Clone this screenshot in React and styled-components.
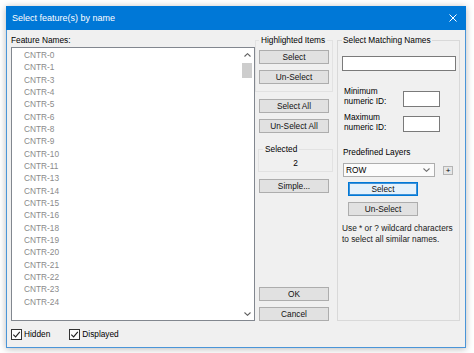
import React from 'react';
import styled, { createGlobalStyle } from 'styled-components';

const GlobalStyle = createGlobalStyle`
  html, body {
    margin: 0;
    padding: 0;
    background: #ffffff;
  }
  body {
    font-family: "Liberation Sans", Arial, sans-serif;
    font-size: 8.3px;
    color: #000;
  }
`;

const names = ['0', '1', '3', '4', '5', '6', '8', '9', '10', '11', '13', '14', '15', '16', '18', '19', '20', '21', '22', '23', '24'];

const Page = styled.div`
  width: 474px;
  height: 353px;
  padding: 6px 0 0 6px;
  box-sizing: border-box;
`;

const Window = styled.div`
  width: 460px;
  height: 342px;
  display: flex;
  flex-direction: column;
  box-shadow: 0 1px 7px rgba(0, 0, 0, 0.28);
`;

const TitleBar = styled.div`
  height: 24px;
  flex: none;
  background: #0078d7;
  color: #fff;
  display: flex;
  align-items: center;
  justify-content: space-between;
  padding: 0 9px 0 6px;
  font-size: 9px;
`;

const Body = styled.div`
  flex: 1;
  background: #f0f0f0;
  border: 1px solid #4a95d8;
  border-top: none;
  padding: 5px 5px 0 4px;
  display: flex;
  flex-direction: column;
`;

const Main = styled.div`
  display: grid;
  grid-template-columns: 244px 82px 123px;
`;

const Column = styled.div`
  display: flex;
  flex-direction: column;
`;

const Label = styled.div`
  line-height: 10px;
  margin-left: ${p => p.$indent || 0}px;
  margin-top: ${p => p.$top || 0}px;
`;

const ListBox = styled.div`
  margin-top: 2px;
  height: 274px;
  box-sizing: border-box;
  border: 1px solid #82878f;
  background: #fff;
  display: flex;
`;

const Items = styled.div`
  flex: 1;
  padding: 1px 0 0 12px;
  overflow: hidden;
`;

const Item = styled.div`
  line-height: 12.33px;
  color: #8a8a8a;
  white-space: nowrap;
`;

const ScrollBar = styled.div`
  width: 13px;
  display: flex;
  flex-direction: column;
  background: #fff;
`;

const Arrow = styled.div`
  height: 13px;
  display: flex;
  align-items: center;
  justify-content: center;
`;

const Track = styled.div`
  flex: 1;
  padding: 2px 2px 0 1px;
`;

const Thumb = styled.div`
  height: 15px;
  background: #cdcdcd;
`;

const Group = styled.fieldset`
  margin: ${p => p.$margin || '0'};
  padding: ${p => p.$pad};
  border: 1px solid ${p => p.$faint ? '#e2e2e2' : '#d9d9d9'};
  min-width: 0;
  width: ${p => p.$width}px;
  box-sizing: border-box;
  display: flex;
  flex-direction: column;
`;

const GroupTitle = styled.legend`
  padding: 0 ${p => p.$pad ?? 2}px;
  line-height: 10px;
  font-size: 8.3px;
`;

const Button = styled.button`
  width: 70px;
  height: 14px;
  padding: 0;
  margin: ${p => p.$margin || '0'};
  box-sizing: border-box;
  font-family: "Liberation Sans", Arial, sans-serif;
  font-size: 8.3px;
  line-height: 12px;
  color: #111;
  background: ${p => p.$focused ? '#e5f1fb' : '#e1e1e1'};
  border: 1px solid ${p => p.$focused ? '#0078d7' : '#adadad'};
  box-shadow: ${p => p.$focused ? 'inset 0 0 0 1px #3d92d9' : 'none'};
  flex: none;
`;

const Count = styled.div`
  text-align: center;
  line-height: 10px;
`;

const TextBox = styled.div`
  width: ${p => p.$width}px;
  height: ${p => p.$height}px;
  margin-top: ${p => p.$top || 0}px;
  box-sizing: border-box;
  background: #fff;
  border: 1px solid #7a7a7a;
  flex: none;
`;

const IdRow = styled.div`
  display: grid;
  grid-template-columns: 61px 37px;
  margin-top: ${p => p.$top}px;
`;

const IdLabel = styled.div`
  line-height: 10px;
  padding-left: 2px;
`;

const ComboRow = styled.div`
  display: flex;
  align-items: center;
  margin-top: 6px;
`;

const Combo = styled.div`
  width: 92px;
  height: 14px;
  margin-left: 1px;
  box-sizing: border-box;
  border: 1px solid #adadad;
  background: #fbfbfb;
  display: flex;
  align-items: center;
  justify-content: space-between;
  padding: 0 4px 0 2px;
`;

const PlusButton = styled.div`
  width: 10px;
  height: 9px;
  margin-left: 8px;
  box-sizing: border-box;
  border: 1px solid #b5b5b5;
  background: #e6e6e6;
  font-size: 8px;
  line-height: 7px;
  text-align: center;
`;

const Help = styled.div`
  margin-top: 7px;
  line-height: 10.5px;
  color: #1a1a1a;
`;

const CheckRow = styled.div`
  display: flex;
  align-items: center;
  gap: 19px;
  margin-top: 7px;
  height: 12px;
`;

const CheckItem = styled.label`
  display: flex;
  align-items: center;
  gap: 2px;
  line-height: 10px;
`;

const Box = styled.span`
  width: 11px;
  height: 11px;
  box-sizing: border-box;
  border: 1px solid #333;
  background: #fff;
  display: flex;
  align-items: center;
  justify-content: center;
`;

const Check = ({ label }) => (
  <CheckItem>
    <Box>
      <svg width="9" height="9" viewBox="0 0 9 9">
        <path d="M1.3 4.6 L3.6 6.9 L7.8 1.8" fill="none" stroke="#222" strokeWidth="1.1" />
      </svg>
    </Box>
    {label}
  </CheckItem>
);

const Chevron = ({ up, color = '#606060' }) => (
  <svg width="7" height="4" viewBox="0 0 7 4">
    <path d={up ? 'M0.5 3.5 L3.5 0.7 L6.5 3.5' : 'M0.5 0.5 L3.5 3.3 L6.5 0.5'} fill="none" stroke={color} strokeWidth="1.1" />
  </svg>
);

export default function App() {
  return (
    <Page>
      <GlobalStyle />
      <Window>
        <TitleBar>
          <span>Select feature(s) by name</span>
          <svg width="8" height="8" viewBox="0 0 8 8">
            <path d="M0.5 0.5 L7.5 7.5 M7.5 0.5 L0.5 7.5" stroke="#fff" strokeWidth="1" />
          </svg>
        </TitleBar>
        <Body>
          <Main>
            <Column>
              <Label>Feature Names:</Label>
              <ListBox>
                <Items>
                  {names.map(n => <Item key={n}>CNTR-{n}</Item>)}
                </Items>
                <ScrollBar>
                  <Arrow><Chevron up /></Arrow>
                  <Track><Thumb /></Track>
                  <Arrow><Chevron /></Arrow>
                </ScrollBar>
              </ListBox>
            </Column>

            <Column>
              <Group $width={78} $pad="5px 3px 7px 3px" $faint>
                <GroupTitle>Highlighted Items</GroupTitle>
                <Button>Select</Button>
                <Button $margin="6px 0 0 0">Un-Select</Button>
              </Group>
              <Button $margin="7px 0 0 4px">Select All</Button>
              <Button $margin="6px 0 0 4px">Un-Select All</Button>
              <Group $width={75} $margin="11px 0 0 3px" $pad="4px 4px 3px 4px" $faint>
                <GroupTitle>Selected</GroupTitle>
                <Count>2</Count>
              </Group>
              <Button $margin="7px 0 0 4px">Simple...</Button>
              <Button $margin="auto 0 0 4px">OK</Button>
              <Button $margin="6px 0 0 4px">Cancel</Button>
            </Column>

            <Group $width={123} $pad="0 3px 0 4px">
              <GroupTitle $pad={1}>Select Matching Names</GroupTitle>
              <TextBox $width={114} $height={15} $top={11} />
              <IdRow $top={15}>
                <IdLabel>Minimum<br />numeric ID:</IdLabel>
                <TextBox $width={37} $height={16} $top={5} />
              </IdRow>
              <IdRow $top={5}>
                <IdLabel>Maximum<br />numeric ID:</IdLabel>
                <TextBox $width={37} $height={16} $top={4} />
              </IdRow>
              <Label $indent={1} $top={15}>Predefined Layers</Label>
              <ComboRow>
                <Combo>
                  <span>ROW</span>
                  <Chevron color="#707070" />
                </Combo>
                <PlusButton>+</PlusButton>
              </ComboRow>
              <Button $focused $margin="5px 0 0 6px">Select</Button>
              <Button $margin="6px 0 0 6px">Un-Select</Button>
              <Help>Use * or ? wildcard characters<br />to select all similar names.</Help>
            </Group>
          </Main>
          <CheckRow>
            <Check label="Hidden" />
            <Check label="Displayed" />
          </CheckRow>
        </Body>
      </Window>
    </Page>
  );
}
